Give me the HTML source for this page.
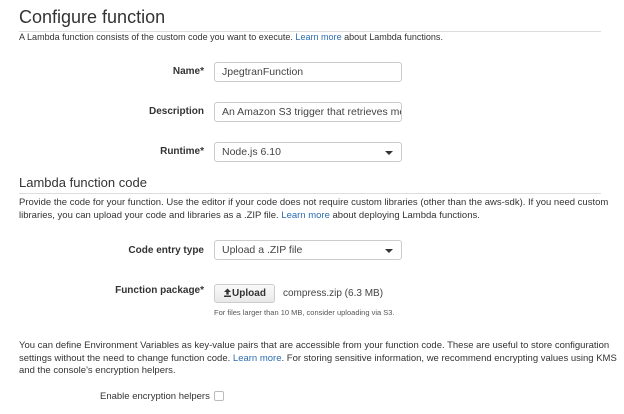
<!DOCTYPE html>
<html><head><style>
body{margin:0;background:#fff;font-family:"Liberation Sans",Arial,sans-serif;color:#333;width:624px;height:414px;overflow:hidden;position:relative}
.a{position:absolute;white-space:nowrap}
.p{font-size:9.5px;line-height:12.5px}
a{color:#2b6cb0;text-decoration:none}
.lab{position:absolute;right:420px;font-size:10px;font-weight:bold;color:#333;white-space:nowrap}
.in{position:absolute;left:214px;width:188px;height:20px;border:1px solid #ccc;border-radius:3px;box-sizing:border-box;font-size:10.5px;line-height:18px;padding-left:7px;color:#444;overflow:hidden;white-space:nowrap;background:#fff}
.car{position:absolute;right:8px;top:8px;width:0;height:0;border-left:4px solid transparent;border-right:4px solid transparent;border-top:4px solid #333}
.hr{position:absolute;left:19px;width:582px;height:1px;background:#ddd}
</style></head><body>
<div class="a" style="left:19px;top:7px;font-size:18px;color:#333">Configure function</div>
<div class="hr" style="top:31px"></div>
<div class="a p" style="left:19px;top:32px;transform:scaleX(0.95);transform-origin:0 0">A Lambda function consists of the custom code you want to execute. <a>Learn more</a> about Lambda functions.</div>

<div class="lab" style="top:66px">Name*</div>
<div class="in" style="top:62px">JpegtranFunction</div>
<div class="lab" style="top:106px">Description</div>
<div class="in" style="top:102px">An Amazon S3 trigger that retrieves metadata</div>
<div class="lab" style="top:146px">Runtime*</div>
<div class="in" style="top:142px">Node.js 6.10<span class="car"></span></div>

<div class="a" style="left:19px;top:175px;font-size:13px;color:#333">Lambda function code</div>
<div class="hr" style="top:193px"></div>
<div class="a p" style="left:19px;top:197px">Provide the code for your function. Use the editor if your code does not require custom libraries (other than the aws-sdk). If you need custom<br>libraries, you can upload your code and libraries as a .ZIP file. <a>Learn more</a> about deploying Lambda functions.</div>

<div class="lab" style="top:245px">Code entry type</div>
<div class="in" style="top:240px">Upload a .ZIP file<span class="car"></span></div>
<div class="lab" style="top:285px">Function package*</div>
<div class="a" style="left:214px;top:284px;width:61px;height:19px;border:1px solid #ccc;border-radius:3px;box-sizing:border-box;background:linear-gradient(#fafafa,#e8e8e8);font-size:10px;font-weight:bold;line-height:17px;text-align:center;color:#333"><svg width="9" height="9" viewBox="0 0 9 9" style="vertical-align:-1px"><path d="M4.5 0.5L1 4h2.3v2.6h2.4V4H8z M1 7.5h7V9H1z" fill="#333"/></svg>Upload</div>
<div class="a" style="left:283px;top:288px;font-size:10px;color:#444">compress.zip (6.3 MB)</div>
<div class="a" style="left:214px;top:308px;font-size:7.5px;color:#555">For files larger than 10 MB, consider uploading via S3.</div>

<div class="a p" style="left:19px;top:340px">You can define Environment Variables as key-value pairs that are accessible from your function code. These are useful to store configuration<br>settings without the need to change function code. <a>Learn more</a>. For storing sensitive information, we recommend encrypting values using KMS<br>and the console's encryption helpers.</div>
<div class="a" style="left:100px;top:391px;font-size:9.5px;color:#333">Enable encryption helpers</div>
<div class="a" style="left:214px;top:391px;width:10px;height:10px;border:1px solid #bbb;border-radius:2px;box-sizing:border-box"></div>
</body></html>
